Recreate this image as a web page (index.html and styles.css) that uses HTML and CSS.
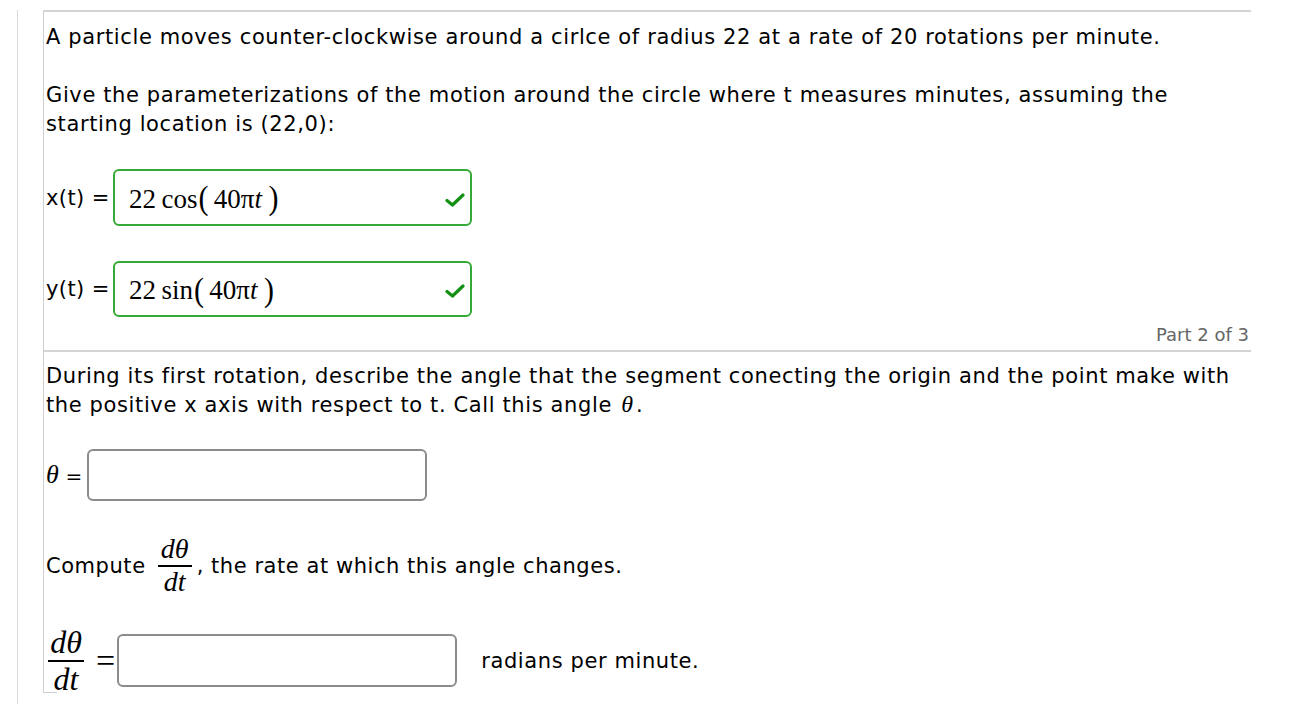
FILE: index.html
```html
<!DOCTYPE html>
<html>
<head>
<meta charset="utf-8">
<link rel="stylesheet" href="styles.css">
</head>
<body>
<div class="rail">
  <div class="panel">
    <p class="text first">A particle moves counter-clockwise around a cirlce of radius 22 at a rate of 20 rotations per minute.</p>
    <p class="text second">Give the parameterizations of the motion around the circle where t measures minutes, assuming the starting location is (22,0):</p>

    <div class="row row-x">
      <span class="label">x(t) =</span>
      <div class="answer correct">
        <span class="math">22&#8201;cos<span class="paren">(</span>&#8201;40π<i>t</i>&#8201;<span class="paren">)</span></span>
        <svg class="check" viewBox="0 0 20 14" width="20" height="14"><path d="M2 7.5 L7.5 12 L18 2" fill="none" stroke="#139013" stroke-width="3.2" stroke-linecap="round" stroke-linejoin="round"/></svg>
      </div>
    </div>

    <div class="row row-y">
      <span class="label">y(t) =</span>
      <div class="answer correct">
        <span class="math">22&#8201;sin<span class="paren">(</span>&#8201;40π<i>t</i>&#8201;<span class="paren">)</span></span>
        <svg class="check" viewBox="0 0 20 14" width="20" height="14"><path d="M2 7.5 L7.5 12 L18 2" fill="none" stroke="#139013" stroke-width="3.2" stroke-linecap="round" stroke-linejoin="round"/></svg>
      </div>
    </div>

    <div class="part">Part 2 of 3</div>
    <div class="divider"></div>

    <p class="text third">During its first rotation, describe the angle that the segment conecting the origin and the point make with the positive x axis with respect to t. Call this angle <i class="mi">θ</i><span class="dot">.</span></p>

    <div class="row row-theta">
      <span class="label"><i class="mi big">θ</i> =</span>
      <div class="answer empty theta-box"></div>
    </div>

    <div class="compute">
      <span class="text-inline">Compute</span>
      <span class="frac small-frac"><span class="num"><i>dθ</i></span><span class="bar"></span><span class="den"><i>dt</i></span></span>
      <span class="text-inline">, the rate at which this angle changes.</span>
    </div>

    <div class="row row-rate">
      <span class="frac rate-frac"><span class="num"><i>dθ</i></span><span class="bar"></span><span class="den"><i>dt</i></span></span>
      <span class="serif-eq">=</span>
      <div class="answer empty rate-box"></div>
      <span class="units">radians per minute.</span>
    </div>
    <div class="corner"></div>
  </div>
</div>
</body>
</html>
```

FILE: styles.css
```css
html, body {
  margin: 0;
  padding: 0;
  background: #ffffff;
  height: 100%;
}
body {
  font-family: "DejaVu Sans", sans-serif;
  color: #000;
  overflow: hidden;
}
.rail {
  margin-left: 17px;
  border-left: 1px solid #d9d9d9;
  height: 704px;
}
.panel {
  margin-left: 25px;
  margin-top: 10px;
  width: 1205px;
  border-top: 2px solid #d4d4d4;
  border-left: 1px solid #cfcfcf;
  height: 680px;
  position: relative;
  padding-left: 2px;
}
.text {
  margin: 0;
  font-size: 21px;
  line-height: 29px;
  letter-spacing: 0.62px;
}
.first { padding-top: 11px; }
.second { margin-top: 29px; width: 1150px; }
.row {
  display: flex;
  align-items: center;
}
.label {
  font-size: 21px;
  letter-spacing: 0.4px;
  white-space: pre;
}
.row-x { margin-top: 30px; }
.row-y { margin-top: 35px; }
.row-x .label, .row-y .label { width: 67px; }
.answer {
  box-sizing: border-box;
  border-radius: 6px;
  background: #fff;
}
.correct {
  width: 359px;
  height: 57px;
  border: 2px solid #37a937;
  display: flex;
  align-items: center;
  justify-content: space-between;
  padding: 0 5px 0 14px;
}
.row-y .correct { height: 56px; }
.math {
  font-family: "Liberation Serif", "Times New Roman", serif;
  font-size: 27px;
  white-space: nowrap;
  word-spacing: 1px;
}
.math .paren {
  font-size: 30px;
  display: inline-block;
  transform: scaleY(1.15);
  font-weight: 300;
  margin-left: 1px;
}
.check { margin-top: 4px; }
.part {
  margin-top: 8px;
  text-align: right;
  font-size: 18px;
  color: #666;
  line-height: 20px;
  padding-right: 2px;
}
.divider {
  margin-top: 5px;
  height: 2px;
  background: #d4d4d4;
  margin-left: -2px;
}
.third { margin-top: 10px; width: 1200px; }
.mi {
  font-family: "Liberation Serif", "Times New Roman", serif;
  font-style: italic;
  font-size: 24px;
  line-height: 1;
  margin-left: 2px;
  margin-right: 3px;
  letter-spacing: 0;
}
.dot { letter-spacing: 0; }
.mi.big { font-size: 26px; margin-left: 0; margin-right: 0; }
.row-theta { margin-top: 29px; }
.row-theta .label { width: 41px; font-size: 20px; }
.empty {
  border: 2px solid #8c8c8c;
}
.theta-box { width: 340px; height: 52px; }
.compute {
  display: flex;
  align-items: center;
  margin-top: 36px;
  font-size: 21px;
  letter-spacing: 0.55px;
}
.frac {
  display: inline-flex;
  flex-direction: column;
  align-items: center;
  font-family: "Liberation Serif", "Times New Roman", serif;
  font-size: 28px;
  line-height: 24px;
  letter-spacing: 0;
}
.frac .bar {
  align-self: stretch;
  height: 2px;
  background: #000;
  margin: 4px 0 3px;
}
.small-frac { margin: 0 5px 0 12px; width: 34px; }
.row-rate { margin-top: 34px; }
.rate-frac { margin-left: 2px; width: 36px; font-size: 32px; line-height: 28px; }
.serif-eq {
  font-family: "Liberation Serif", "Times New Roman", serif;
  font-size: 34px;
  margin-left: 12px;
  margin-right: 2px;
  line-height: 30px;
}
.rate-box { width: 340px; height: 53px; }
.units {
  margin-left: 24px;
  font-size: 21px;
  letter-spacing: 0.6px;
}
.corner {
  position: absolute;
  left: -1px;
  top: 680px;
  width: 14px;
  height: 1px;
  background: #cfcfcf;
}
```
